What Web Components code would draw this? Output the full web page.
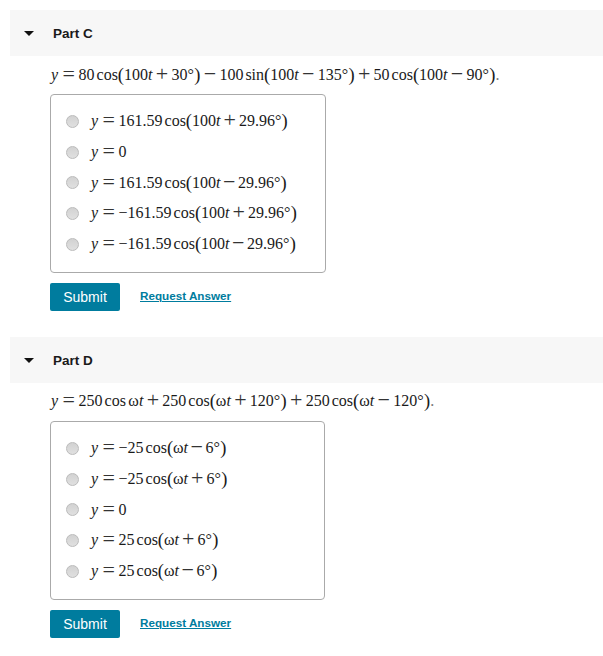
<!DOCTYPE html>
<html>
<head>
<meta charset="utf-8">
<style>
    html, body { margin: 0; background: #fff; }
    body { padding: 10px 0 0 10px; font-family: "Liberation Sans", Arial, sans-serif; }
</style>
</head>
<body>

<quiz-part title="Part C">
    <m-eq slot="question">y|=|80|cos(100t|+|30°)|−|100|sin(100t|−|135°)|+|50|cos(100t|−|90°).</m-eq>
    <radio-row><m-eq>y|=|161.59|cos(100t|+|29.96°)</m-eq></radio-row>
    <radio-row><m-eq>y|=|0</m-eq></radio-row>
    <radio-row><m-eq>y|=|161.59|cos(100t|−|29.96°)</m-eq></radio-row>
    <radio-row><m-eq>y|=|−161.59|cos(100t|+|29.96°)</m-eq></radio-row>
    <radio-row><m-eq>y|=|−161.59|cos(100t|−|29.96°)</m-eq></radio-row>
</quiz-part>

<quiz-part title="Part D" style="margin-top:26px" narrow>
    <m-eq slot="question">y|=|250|cos|ωt|+|250|cos(ωt|+|120°)|+|250|cos(ωt|−|120°).</m-eq>
    <radio-row><m-eq>y|=|−25|cos(ωt|−|6°)</m-eq></radio-row>
    <radio-row><m-eq>y|=|−25|cos(ωt|+|6°)</m-eq></radio-row>
    <radio-row><m-eq>y|=|0</m-eq></radio-row>
    <radio-row><m-eq>y|=|25|cos(ωt|+|6°)</m-eq></radio-row>
    <radio-row><m-eq>y|=|25|cos(ωt|−|6°)</m-eq></radio-row>
</quiz-part>

<script>
// equation text comes in as tokens split by |, letters y t and omega go italic
class mEq extends HTMLElement {
    connectedCallback() {
        const tokens = this.textContent.split('|');
        this.textContent = '';
        const root = this.attachShadow({mode: 'open'});
        const style = document.createElement('style');
        style.textContent = `
            :host { display: inline-block; font-family: "Liberation Serif", "Times New Roman", serif;
                font-size: 16px; line-height: 20px; height: 20px; color: #1a1a1a; white-space: nowrap; }
            i { font-style: italic; }
            .op { font-size: 22px; line-height: 0; margin: 0 3px; color: #333; vertical-align: -1px; }
            .eq { margin: 0 3.5px 0 4.5px; }
            .minus { margin: 0 2.5px; }
            :host([slot="question"]) .op { margin: 0 3.3px; }
            :host([slot="question"]) .eq { margin: 0 3.5px 0 4.5px; }
            .paren { font-size: 18.5px; line-height: 0; vertical-align: -0.5px; }
            .fn { margin-left: 2px; }
            .wt { margin-left: 2.5px; }
            .dot { color: #777; }
            .deg { margin-right: 0.3px; }
        `;
        root.appendChild(style);
        tokens.forEach((tok) => {
            const span = document.createElement('span');
            if (tok === '=' || tok === '+' || tok === '−') {
                span.className = tok === '−' ? 'op minus' : tok === '=' ? 'op eq' : 'op';
                span.textContent = tok;
            } else {
                if (/^(cos|sin)/.test(tok)) span.className = 'fn';
                if (tok === 'ωt') span.className = 'wt';
                span.innerHTML = tok
                    .replace(/(ω|t)(?![a-z])/g, '<i>$1</i>')
                    .replace(/^y$/, '<i>y</i>')
                    .replace(/°/g, '<span class="deg">°</span>')
                    .replace(/[()]/g, '<span class="paren">$&</span>')
                    .replace(/\.$/, '<span class="dot">.</span>');
            }
            root.appendChild(span);
        });
    }
}

const rowTemplate = document.createElement('template');
rowTemplate.innerHTML = `
<style>
    :host { display: flex; align-items: center; height: 30.7px; }
    .radio {
        width: 13px;
        height: 13px;
        border-radius: 50%;
        flex: none;
        border: 1px solid #bbb;
        box-sizing: border-box;
        background: linear-gradient(#d2d2d2, #e0e0e0);
        margin-right: 12px;
    }
</style>
<span class="radio"></span><slot></slot>
`;

class radioRow extends HTMLElement {
    constructor() {
        super();
        this.attachShadow({mode: 'open'});
        this.shadowRoot.appendChild(rowTemplate.content.cloneNode(true));
    }
}

const partTemplate = document.createElement('template');
partTemplate.innerHTML = `
<style>
    :host { display: block; }
    .head {
        display: flex;
        align-items: center;
        height: 46px;
        background: #f7f7f7;
        padding-left: 14px;
        font-weight: bold;
        color: #1a1a1a;
    }
    .arrow {
        width: 0;
        height: 0;
        border-left: 5.5px solid transparent;
        border-right: 5.5px solid transparent;
        border-top: 5.5px solid #111;
        margin-right: 18px;
    }
    .title { font-size: 13.5px; margin-left: 1px; }
    .body { padding-left: 40px; }
    .question { padding: 9px 0 0 1px; height: 29px; }
    .choices {
        width: 276px;
        height: 179px;
        box-sizing: border-box;
        border: 1px solid #aaa;
        border-radius: 4px;
        padding: 11px 0 0 15px;
    }
    :host([narrow]) .question { padding-top: 8px; height: 30px; }
    :host([narrow]) .choices { width: 275px; }
    .actions { display: flex; align-items: center; margin-top: 10px; }
    .submit {
        width: 70px;
        height: 28px;
        background: #007c9e;
        color: #fff;
        border-radius: 2px;
        font-size: 14px;
        display: flex;
        align-items: center;
        justify-content: center;
    }
    a {
        margin-left: 20px;
        font-size: 11.7px;
        font-weight: bold;
        color: #007c9e;
        text-decoration: underline;
        position: relative;
        top: -2px;
    }
</style>
<div class="head"><span class="arrow"></span><span class="title"></span></div>
<div class="body">
    <div class="question"><slot name="question"></slot></div>
    <div class="choices"><slot></slot></div>
    <div class="actions"><span class="submit">Submit</span><a href="#">Request Answer</a></div>
</div>
`;

class quizPart extends HTMLElement {
    constructor() {
        super();
        this.attachShadow({mode: 'open'});
        this.shadowRoot.appendChild(partTemplate.content.cloneNode(true));
        this.shadowRoot.querySelector('.title').textContent = this.getAttribute('title');
    }
}

window.customElements.define('m-eq', mEq);
window.customElements.define('radio-row', radioRow);
window.customElements.define('quiz-part', quizPart);
</script>
</body>
</html>
